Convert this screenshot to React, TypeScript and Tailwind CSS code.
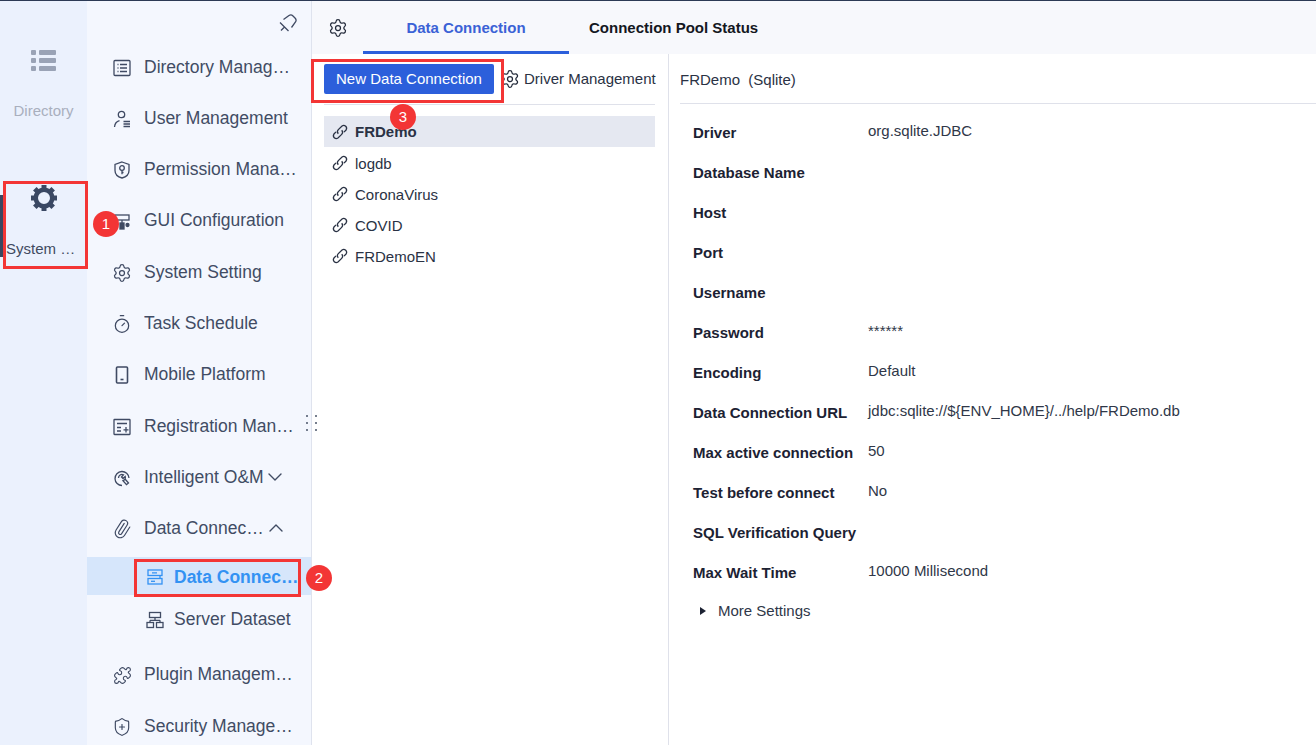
import { ChevronDown, ChevronUp, Paperclip, Puzzle, Settings, ShieldPlus, Timer } from "lucide-react";
import type { ReactNode } from "react";

const Ico = ({ children }: { children: ReactNode }) => (
  <svg viewBox="0 0 18 18" width="18" height="18" fill="none" stroke="currentColor" strokeWidth="1.3" className="shrink-0">
    {children}
  </svg>
);

const ChainIcon = () => (
  <svg viewBox="0 0 16 16" width="18" height="18" fill="none" stroke="currentColor" strokeWidth="1.15" className="mr-[6px] shrink-0">
    <path d="M6.500 9.500a2.600 2.600 0 0 1 0-3.600L9.800 2.600a2.600 2.600 0 0 1 3.600 3.600L11.500 8.100" />
    <path d="M9.500 6.500a2.600 2.600 0 0 1 0 3.600L6.200 13.400a2.600 2.600 0 0 1-3.600-3.600L4.500 7.900" />
  </svg>
);

const GearSolid = () => (
  <svg viewBox="0 0 26 26" width="26" height="26" fill="none" stroke="#3a4863" className="mt-[62px]">
    <circle cx="13" cy="13" r="8.250" strokeWidth="4.500" />
    {[0, 45, 90, 135, 180, 225, 270, 315].map((a) => (
      <path key={a} d="M13 0v5" strokeWidth="5" transform={`rotate(${a} 13 13)`} />
    ))}
  </svg>
);

const navItems: { label: string; icon: ReactNode; chevron?: boolean }[] = [
  {
    label: "Directory Management",
    icon: (
      <Ico>
        <rect x="1" y="1.500" width="16" height="15" rx="1" />
        <path d="M4.500 5.500h1M7 5.500h7M4.500 9h1M7 9h7M4.500 12.500h1M7 12.500h7" />
      </Ico>
    ),
  },
  {
    label: "User Management",
    icon: (
      <Ico>
        <circle cx="8.500" cy="4.500" r="3.200" />
        <path d="M1.500 17c.3-3 2-5.500 5-6.300M10.500 11.500h6.500M10.500 14h6.500M10.500 16.500h6.500" />
      </Ico>
    ),
  },
  {
    label: "Permission Management",
    icon: (
      <Ico>
        <path d="M9 1l7 2.500v6c0 4-3 6.500-7 7.500-4-1-7-3.500-7-7.500v-6z" />
        <circle cx="9" cy="7" r="2.300" />
        <path d="M9 9.300v4M9 11.500h1.500" />
      </Ico>
    ),
  },
  {
    label: "GUI Configuration",
    icon: (
      <Ico>
        <rect x="2" y="2" width="14" height="5" />
        <path d="M9 7v3" />
        <rect x="7" y="10" width="4" height="6" fill="currentColor" />
        <circle cx="14.500" cy="12" r="1.500" fill="currentColor" />
      </Ico>
    ),
  },
  { label: "System Setting", icon: <Settings size={20} strokeWidth={1.5} className="-ml-[1px]" /> },
  { label: "Task Schedule", icon: <Timer size={20} strokeWidth={1.5} className="-ml-[1px]" /> },
  {
    label: "Mobile Platform",
    icon: (
      <Ico>
        <rect x="3.500" y="1" width="11" height="16" rx="1" strokeWidth="1.600" />
        <path d="M7.500 13.500h3" strokeWidth="1.600" />
      </Ico>
    ),
  },
  {
    label: "Registration Management",
    icon: (
      <Ico>
        <rect x="1" y="1.500" width="16" height="15" rx="0.500" />
        <path d="M4 5.500h10M4 9.500h4M4 13h4M13 9v5.500M10.500 11.800h5" />
      </Ico>
    ),
  },
  {
    label: "Intelligent O&M",
    chevron: true,
    icon: (
      <Ico>
        <path d="M16 9a7 7 0 1 0-7 7.500" />
        <path d="M5.500 9a3.500 3.500 0 0 1 5-3.200L8.500 8l1.500 1.500 2.200-2a3.500 3.500 0 0 1-2.200 4.200l3.500 4 2-1.700-3.500-4" />
      </Ico>
    ),
  },
];

const bottomItems: { label: string; icon: ReactNode }[] = [
  { label: "Plugin Management", icon: <Puzzle size={19} strokeWidth={1.4} /> },
  { label: "Security Management", icon: <ShieldPlus size={20} strokeWidth={1.4} className="-ml-[1px]" /> },
];

const connections = ["FRDemo", "logdb", "CoronaVirus", "COVID", "FRDemoEN"];

const details: [string, string][] = [
  ["Driver", "org.sqlite.JDBC"],
  ["Database Name", ""],
  ["Host", ""],
  ["Port", ""],
  ["Username", ""],
  ["Password", "******"],
  ["Encoding", "Default"],
  ["Data Connection URL", "jdbc:sqlite://${ENV_HOME}/../help/FRDemo.db"],
  ["Max active connection", "50"],
  ["Test before connect", "No"],
  ["SQL Verification Query", ""],
  ["Max Wait Time", "10000 Millisecond"],
];

const NavRow = ({ label, icon, chevron }: { label: string; icon: ReactNode; chevron?: boolean }) => (
  <div className="flex h-[51.3px] items-center pl-[26px] pr-[12px] text-[#414c64]">
    <span className="flex w-[31px] shrink-0 translate-y-[1px] items-center text-[#3f4a63]">{icon}</span>
    <span className={`truncate text-[17.5px] ${chevron ? "" : "flex-1"}`}>{label}</span>
    {chevron && <ChevronDown size={24} strokeWidth={1.4} className="-ml-[1px] shrink-0" />}
  </div>
);

const Badge = ({ n, className }: { n: number; className: string }) => (
  <div className={`absolute flex h-[26px] w-[26px] items-center justify-center rounded-full bg-[#f33535] text-[15px] text-white ${className}`}>
    {n}
  </div>
);

export default function App() {
  return (
    <div className="relative flex h-[745px] w-[1316px] overflow-hidden border-t border-t-[#2c3a55] bg-white font-['Liberation_Sans',Arial,sans-serif]">
      {/* icon rail */}
      <aside className="relative flex w-[87px] shrink-0 flex-col items-center bg-[#ebf1fd] pt-[49px]">
        <div className="flex flex-col gap-[3px]">
          {[0, 1, 2].map((i) => (
            <div key={i} className="flex gap-[3px]">
              <div className="h-[5px] w-[5px] rounded-[1px] bg-[#9aa3b6]" />
              <div className="h-[5px] w-[17px] rounded-[1px] bg-[#9aa3b6]" />
            </div>
          ))}
        </div>
        <div className="mt-[29px] text-[15px] text-[#a9afbd]">Directory</div>
        <GearSolid />
        <div className="mt-[27px] w-full truncate pl-[6px] pr-[8px] text-[15px] text-[#3f4a5f]">System Management</div>
        <div className="absolute left-0 top-[194px] h-[62px] w-[3px] bg-[#3a4660]" />
      </aside>

      {/* nav */}
      <nav className="w-[225px] shrink-0 border-r border-r-[#dfe3ee] bg-[#f4f7fe]">
        <div className="flex h-[40px] items-start justify-end pr-[14px] pt-[13px]">
          <svg viewBox="0 0 18 18" width="18" height="18" fill="none" stroke="#3f4a63" strokeWidth="1.300">
            <path d="M4.500 5.500L10 1.500c1.500-1 2.500-1 4 .5l2 2c1.500 1.500 1.500 2.500.5 4l-4 5.500" />
            <path d="M1 8.500L9.500 17M5.500 13l-3.500 3.500" />
          </svg>
        </div>
        {navItems.map((item) => (
          <NavRow key={item.label} {...item} />
        ))}
        <div className="flex h-[51.3px] items-center pl-[26px] pr-[12px] text-[#414c64]">
          <span className="flex w-[31px] shrink-0 translate-y-[1px] items-center text-[#3f4a63]">
            <Paperclip size={20} strokeWidth={1.4} className="-ml-[1px] -rotate-[12deg]" />
          </span>
          <span className="w-[121px] truncate text-[17.5px]">Data Connection</span>
          <ChevronUp size={24} strokeWidth={1.4} className="-ml-[1px] shrink-0" />
        </div>
        <div className="mt-[3px] flex h-[38px] items-center bg-[#d6e6fb] pl-[59px] pr-[10px] text-[#3392f3]">
          <svg viewBox="0 0 18 18" width="18" height="18" fill="none" stroke="currentColor" strokeWidth="1.300" className="mr-[10px] shrink-0 translate-y-[1px]">
            <rect x="2" y="2" width="14" height="5.500" />
            <path d="M6 4.800h5M14 7.500v3" />
            <rect x="2" y="10.500" width="14" height="5.500" />
            <path d="M5 13.300h4" />
          </svg>
          <span className="translate-y-[1px] truncate text-[17.5px] font-bold">Data Connection</span>
        </div>
        <div className="flex h-[49px] items-center pl-[59px] pr-[10px] text-[#414c64]">
          <svg viewBox="0 0 18 18" width="18" height="18" fill="none" stroke="currentColor" strokeWidth="1.300" className="mr-[10px] shrink-0 translate-y-[1px]">
            <rect x="3.500" y="1.500" width="11" height="5" />
            <path d="M9 6.500v2.800M4 9.300h10M4 9.300v2.200M14 9.300v2.200" />
            <rect x="1" y="11.500" width="6.500" height="5" />
            <rect x="10.500" y="11.500" width="6.500" height="5" />
          </svg>
          <span className="truncate text-[17.5px]">Server Dataset</span>
        </div>
        <div className="mt-[5px]">
          {bottomItems.map((item) => (
            <NavRow key={item.label} {...item} />
          ))}
        </div>
      </nav>

      {/* main */}
      <main className="flex min-w-0 flex-1 flex-col">
        <div className="flex h-[53px] shrink-0 bg-[#f7f8fc]">
          <div className="flex w-[51px] items-center justify-center text-[#232a3a]">
            <Settings size={20} strokeWidth={1.5} />
          </div>
          <div className="flex h-full w-[206px] items-center justify-center border-b-[3px] border-b-[#2c5fdb] pt-[5px] text-[15px] font-bold text-[#3b62d6]">
            Data Connection
          </div>
          <div className="flex h-full items-center pl-[20px] pt-[2px] text-[15px] font-bold text-[#14171f]">Connection Pool Status</div>
        </div>

        <div className="flex min-h-0 flex-1">
          {/* connection list */}
          <section className="w-[357px] shrink-0 border-r border-r-[#dfe1ea] pl-[12px] pr-[13px] pt-[10px]">
            <div className="flex items-center border-b border-b-[#dfe1ea] pb-[10px]">
              <button className="h-[30px] w-[170px] shrink-0 rounded-[2px] bg-[#2c5fdb] text-[15px] text-white">New Data Connection</button>
              <Settings size={20} strokeWidth={1.5} className="ml-[6px] shrink-0 text-[#232a3a]" />
              <span className="ml-[4px] shrink-0 whitespace-nowrap text-[15px] text-[#2a3244]">Driver Management</span>
            </div>
            <div className="mt-[11px]">
              {connections.map((c, i) => (
                <div key={c} className={`flex h-[31.2px] items-center pl-[7px] text-[15px] text-[#2a3244] ${i === 0 ? "bg-[#e5e8f1] font-bold" : ""}`}>
                  <ChainIcon />
                  <span className="translate-y-[1px]">{c}</span>
                </div>
              ))}
            </div>
          </section>

          {/* details */}
          <section className="min-w-0 flex-1 pl-[11px]">
            <div className="flex h-[50px] items-center border-b border-b-[#dfe1ea] pt-[3px] text-[15px] whitespace-pre text-[#2a3244]">FRDemo  (Sqlite)</div>
            <div className="mt-[8px] pl-[13px]">
              {details.map(([k, v]) => (
                <div key={k} className="flex h-[40px] items-center">
                  <div className="w-[175px] shrink-0 translate-y-[1px] whitespace-nowrap text-[15px] font-bold text-[#1c2233]">{k}</div>
                  <div className="-translate-y-[1px] text-[15px] text-[#2f3748]">{v}</div>
                </div>
              ))}
              <div className="flex h-[38px] items-center pl-[7px] text-[15px] text-[#2f3748]">
                <div className="mr-[12px] h-0 w-0 border-y-[4px] border-l-[6px] border-y-transparent border-l-[#1c2233]" />
                More Settings
              </div>
            </div>
          </section>
        </div>
      </main>

      {/* drag handle */}
      <div className="absolute left-[306px] top-[414px] grid grid-cols-2 gap-x-[7px] gap-y-[5px]">
        {[0, 1, 2, 3, 4, 5].map((i) => (
          <div key={i} className="h-[2px] w-[2px] rounded-full bg-[#4a5468]" />
        ))}
      </div>

      {/* annotations */}
      <div className="absolute left-[3px] top-[180px] h-[88px] w-[85px] border-[3px] border-[#f33535]" />
      <div className="absolute left-[134px] top-[558px] h-[38px] w-[167px] border-[3px] border-[#f33535]" />
      <div className="absolute left-[311px] top-[58px] h-[44px] w-[193px] border-[3px] border-[#f33535]" />
      <Badge n={1} className="left-[93px] top-[210px]" />
      <Badge n={2} className="left-[306px] top-[564px]" />
      <Badge n={3} className="left-[390px] top-[103px]" />
    </div>
  );
}
